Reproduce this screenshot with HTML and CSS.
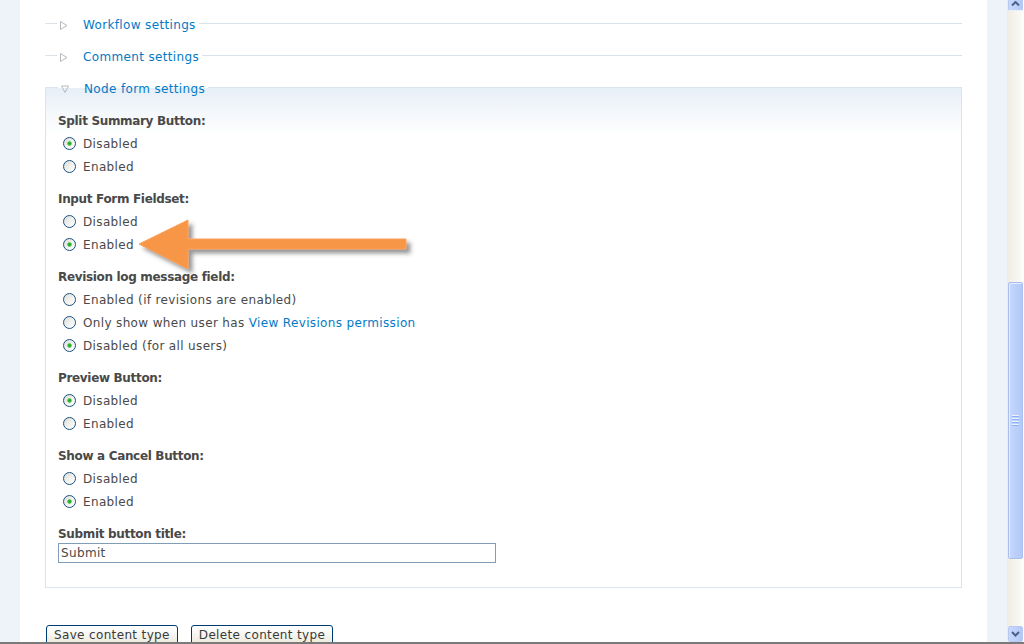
FILE: index.html
```html
<!DOCTYPE html>
<html lang="en">
<head>
<meta charset="utf-8">
<title>Node form settings</title>
<link rel="stylesheet" href="styles.css">
</head>
<body>
<div class="window">
  <div class="side side-left"></div>
  <main class="content">
    <fieldset class="collapsible collapsed">
      <legend><a href="#"><svg class="tri" width="8" height="9" viewBox="0 0 8 9"><polygon points="0.5,0.5 7,4.5 0.5,8.5" fill="none" stroke="#b9b9b9"/></svg><span>Workflow settings</span></a></legend>
    </fieldset>
    <fieldset class="collapsible collapsed">
      <legend><a href="#"><svg class="tri" width="8" height="9" viewBox="0 0 8 9"><polygon points="0.5,0.5 7,4.5 0.5,8.5" fill="none" stroke="#b9b9b9"/></svg><span>Comment settings</span></a></legend>
    </fieldset>
    <fieldset class="collapsible expanded">
      <legend><a href="#"><svg class="tri" width="8" height="9" viewBox="0 0 8 9"><polygon points="0.5,1 7.5,1 4,7.5" fill="none" stroke="#b9b9b9"/></svg><span>Node form settings</span></a></legend>

      <div class="form-item">
        <div class="item-label">Split Summary Button:</div>
        <label class="option"><input type="radio" name="split" checked>Disabled</label>
        <label class="option"><input type="radio" name="split">Enabled</label>
      </div>

      <div class="form-item">
        <div class="item-label">Input Form Fieldset:</div>
        <label class="option"><input type="radio" name="fieldset">Disabled</label>
        <label class="option"><input type="radio" name="fieldset" checked>Enabled</label>
      </div>

      <div class="form-item">
        <div class="item-label">Revision log message field:</div>
        <label class="option"><input type="radio" name="revlog">Enabled (if revisions are enabled)</label>
        <label class="option"><input type="radio" name="revlog">Only show when user has&nbsp;<a href="#">View Revisions permission</a></label>
        <label class="option"><input type="radio" name="revlog" checked>Disabled (for all users)</label>
      </div>

      <div class="form-item">
        <div class="item-label">Preview Button:</div>
        <label class="option"><input type="radio" name="preview" checked>Disabled</label>
        <label class="option"><input type="radio" name="preview">Enabled</label>
      </div>

      <div class="form-item">
        <div class="item-label">Show a Cancel Button:</div>
        <label class="option"><input type="radio" name="cancel">Disabled</label>
        <label class="option"><input type="radio" name="cancel" checked>Enabled</label>
      </div>

      <div class="form-item text-item">
        <label class="item-label" for="submit-title">Submit button title:</label>
        <input class="form-text" id="submit-title" type="text" value="Submit">
      </div>
    </fieldset>

    <div class="actions">
      <button class="form-submit" type="button">Save content type</button>
      <button class="form-submit" type="button">Delete content type</button>
    </div>

    <svg class="callout-arrow" width="300" height="75" viewBox="0 0 300 75">
      <defs>
        <filter id="shadow" x="-10%" y="-20%" width="130%" height="150%">
          <feDropShadow dx="4" dy="4" stdDeviation="2" flood-color="#444" flood-opacity="0.55"/>
        </filter>
      </defs>
      <polygon points="9,34 58,10 58,29 276,29 276,39 58,39 58,59" fill="#f79646" stroke="#f9a15c" stroke-width="1" filter="url(#shadow)"/>
    </svg>
  </main>
  <div class="side side-right"></div>
  <div class="scrollbar">
    <div class="sb-btn sb-up"><svg width="9" height="5" viewBox="0 0 9 5"><polyline points="1,4.5 4.5,1 8,4.5" fill="none" stroke="#4d6185" stroke-width="2"/></svg></div>
    <div class="sb-gap-top"></div>
    <div class="sb-thumb">
      <div class="grip"><i></i><i></i><i></i><i></i></div>
    </div>
    <div class="sb-gap-bottom"></div>
    <div class="sb-btn sb-down"><svg width="9" height="6" viewBox="0 0 9 6"><polyline points="1,1 4.5,4.5 8,1" fill="none" stroke="#4d6185" stroke-width="2"/></svg></div>
  </div>
</div>
<div class="frame-bottom"></div>
</body>
</html>
```

FILE: styles.css
```css
html, body {
  margin: 0;
  padding: 0;
}

body {
  width: 1024px;
  height: 644px;
  overflow: hidden;
  font-family: "DejaVu Sans", Verdana, sans-serif;
  font-size: 12px;
  letter-spacing: 0.35px;
  color: #494949;
  background: #fff;
}

a {
  color: #027ac6;
  text-decoration: none;
}

.window {
  position: relative;
  display: flex;
  height: 642px;
  overflow: hidden;
}

.side {
  background: #edf3f9;
  flex: none;
}

.side-left {
  width: 20px;
}

.side-right {
  width: 20px;
}

.content {
  width: 967px;
  flex: none;
  background: #fff;
  padding: 13px 25px 0;
  box-sizing: border-box;
}

/* Fieldsets */
fieldset.collapsible {
  margin: 0 0 12px;
  padding: 0 12px;
  min-width: 0;
  border: 1px solid #dbe3ea;
}

fieldset.collapsed {
  border-width: 1px 0 0 0;
  padding: 0 12px;
}

fieldset.expanded {
  border-color: #d9e4ee;
  background: linear-gradient(#e6eef7 0, #f3f7fb 22px, #fff 48px);
  padding: 12px 12px 24px;
  margin-bottom: 37px;
}

fieldset legend {
  padding: 4px 3px 0;
  line-height: 16px;
  font-size: 12px;
}

fieldset legend a {
  display: flex;
  align-items: center;
}

fieldset legend .tri {
  flex: none;
  margin-right: 15px;
}

/* Form items */
.form-item {
  margin-bottom: 9px;
}

.item-label {
  display: block;
  box-sizing: border-box;
  font-weight: bold;
  letter-spacing: -0.33px;
  padding-top: 2px;
  line-height: 21px;
  height: 23px;
}

.option {
  display: flex;
  align-items: center;
  height: 23px;
  padding-left: 5px;
}

.option input[type="radio"] {
  appearance: none;
  -webkit-appearance: none;
  flex: none;
  width: 13px;
  height: 13px;
  margin: 0 7px 0 0;
  border: 1px solid #1c5180;
  border-radius: 50%;
  box-sizing: border-box;
  background: linear-gradient(135deg, #dcdcd6 0%, #f2f2ef 55%, #ffffff 100%);
}

.option input[type="radio"]:checked {
  background:
    radial-gradient(circle at 50% 50%, #21a121 0, #3fbd3f 1.8px, rgba(63,189,63,0) 2.6px),
    linear-gradient(135deg, #dcdcd6 0%, #f2f2ef 55%, #ffffff 100%);
}

.text-item {
  margin-bottom: 0;
  padding-top: 2px;
}

.text-item .item-label {
  padding-top: 1px;
  line-height: 18px;
  height: 19px;
  margin: 0;
}

.form-text {
  display: block;
  width: 438px;
  height: 20px;
  box-sizing: border-box;
  border: 1px solid #7f9db9;
  padding: 1px 2px;
  margin: 0;
  font-family: "DejaVu Sans", Verdana, sans-serif;
  font-size: 12px;
  letter-spacing: 0.35px;
  color: #494949;
  background: #fff;
}

/* Buttons */
.actions {
  display: flex;
  gap: 13px;
  padding-left: 1px;
}

.form-submit {
  height: 20px;
  padding: 0 7px;
  margin: 0;
  font-family: "DejaVu Sans", Verdana, sans-serif;
  font-size: 12px;
  letter-spacing: 0.35px;
  color: #3a3a3a;
  border: 1px solid #003c74;
  border-radius: 3px;
  background: linear-gradient(#ffffff 0%, #f6f6f1 50%, #ece9d8 100%);
  line-height: 16px;
}

/* Callout arrow (annotation over the form) */
.callout-arrow {
  position: absolute;
  left: 130px;
  top: 210px;
}

/* Scrollbar */
.scrollbar {
  width: 17px;
  flex: none;
  display: flex;
  flex-direction: column;
  align-items: center;
  background: linear-gradient(90deg, #eeede5 0, #f3f1ea 30%, #f8f7f2 70%, #fefefb 100%);
}

.sb-btn {
  width: 15px;
  flex: none;
  box-sizing: border-box;
  border: 1px solid #b6c9f3;
  border-radius: 2px;
  background: linear-gradient(90deg, #c8d8fd, #bcd0fb 60%, #b3c8f6);
  display: flex;
  justify-content: center;
}

.sb-up {
  height: 11px;
  border-top: 0;
  border-radius: 0 0 2px 2px;
  border-bottom-color: #e8eefc;
  align-items: flex-start;
  padding-top: 1px;
}

.sb-down {
  height: 16px;
  align-items: center;
}

.sb-gap-top {
  height: 271px;
  flex: none;
}

.sb-thumb {
  width: 15px;
  height: 277px;
  flex: none;
  box-sizing: border-box;
  border: 1px solid #a9bff0;
  border-radius: 2px;
  background: linear-gradient(90deg, #c9d9fd 0%, #bcd0fb 45%, #b3c9f7 100%);
  box-shadow: inset 1px 1px 0 #e3ebfe;
  display: flex;
  align-items: center;
  justify-content: center;
}

.grip {
  display: flex;
  flex-direction: column;
  gap: 1px;
}

.grip i {
  display: block;
  width: 7px;
  height: 1px;
  background: #eef4fe;
  border-bottom: 1px solid #8cb0f8;
}

.sb-gap-bottom {
  flex: 1;
}

.frame-bottom {
  height: 2px;
  background: #7a7a7a;
}
```
